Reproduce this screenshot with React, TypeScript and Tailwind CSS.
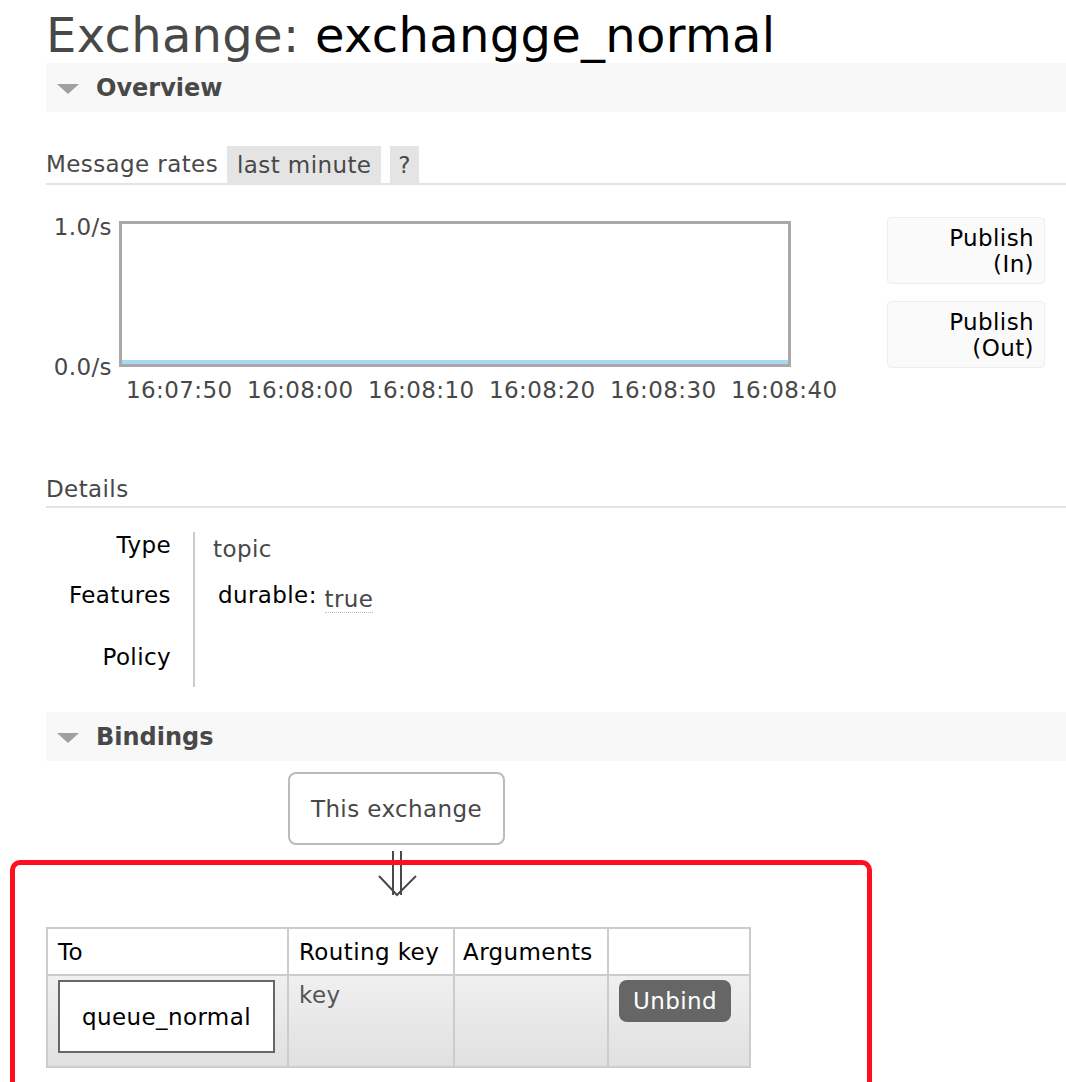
import React from 'react';

const font = { fontFamily: '"DejaVu Sans", Verdana, sans-serif' };

const times = ['16:07:50', '16:08:00', '16:08:10', '16:08:20', '16:08:30', '16:08:40'];

const SectionHeader = ({ title }: { title: string }) => (
  <div className="flex h-[49px] items-center bg-[#f8f8f8] pl-[11px]">
    <svg width="22" height="10" viewBox="0 0 22 10" className="mr-[17px] mt-[2px]">
      <polygon points="0,0 22,0 11,10" fill="#a0a0a0" />
    </svg>
    <span className="text-[24px] font-bold leading-[28px] tracking-normal text-[#484848]">{title}</span>
  </div>
);

const LegendBox = ({ a, b }: { a: string; b: string }) => (
  <div className="flex h-[67px] w-[158px] flex-col items-end justify-center rounded-[4px] border border-[#eeeeee] bg-[#fafafa] pr-[10px] leading-[26px] text-black">
    <span>{a}</span>
    <span>{b}</span>
  </div>
);

export default function App() {
  return (
    <div
      className="relative min-h-[1082px] overflow-hidden bg-white pl-[46px] text-[23px] leading-[26px] tracking-[0.4px]"
      style={font}
    >
      <h1 className="pt-[7px] text-[48px] leading-[56px] tracking-[0.3px] text-[#484848]">
        Exchange: <span className="text-black">exchangge_normal</span>
      </h1>

      <SectionHeader title="Overview" />

      {/* message rates */}
      <div className="mt-[34px] flex h-[39px] items-end border-b-2 border-[#e4e4e4] text-[#484848]">
        <span className="pb-[6px]">Message rates</span>
        <span className="ml-[9px] flex h-[37px] items-center bg-[#e4e4e4] px-[10px]">last minute</span>
        <span className="ml-[9px] flex h-[37px] items-center bg-[#e4e4e4] px-[8px]">?</span>
      </div>

      <div className="mt-[36px] flex">
        <div className="flex w-[780px] shrink-0 flex-col">
          <div className="flex">
            <div className="flex h-[146px] w-[66px] flex-col items-end justify-between text-[#484848]">
              <span className="-mt-[7px]">1.0/s</span>
              <span className="-mb-[13px]">0.0/s</span>
            </div>
            <div className="ml-[7px] flex h-[146px] w-[672px] flex-col justify-end border-[3px] border-[#a9a9a9]">
              <div className="h-[4px] bg-[#a8d8f2]" />
            </div>
          </div>
          <div className="ml-[80px] mt-[10px] flex whitespace-nowrap text-[#484848]">
            {times.map((t) => (
              <span key={t} className="w-[121px] shrink-0">
                {t}
              </span>
            ))}
          </div>
        </div>
        <div className="ml-[61px] -mt-[4px] flex flex-col gap-[17px]">
          <LegendBox a="Publish" b="(In)" />
          <LegendBox a="Publish" b="(Out)" />
        </div>
      </div>

      {/* details */}
      <div className="mt-[73px] border-b-2 border-[#e4e4e4] pb-[4px] text-[#484848]">Details</div>
      <div className="mt-[24px] flex">
        <div className="flex w-[147px] flex-col items-end pr-[22px] text-black">
          <span>Type</span>
          <span className="mt-[24px]">Features</span>
          <span className="mt-[36px]">Policy</span>
        </div>
        <div className="h-[155px] w-[2px] bg-[#cccccc]" />
        <div className="flex flex-col pl-[18px]">
          <span className="mt-[4px] text-[#484848]">topic</span>
          <span className="ml-[5px] mt-[20px] text-black">
            durable:{' '}
            <span className="relative top-[4px] border-b border-dotted border-[#bbbbbb] text-[#484848]">true</span>
          </span>
        </div>
      </div>

      <div className="mt-[25px]">
        <SectionHeader title="Bindings" />
      </div>

      <div className="ml-[242px] mt-[11px] flex h-[73px] w-[217px] items-center justify-center rounded-[8px] border-2 border-[#bbbbbb] text-[#484848]">
        This exchange
      </div>
      <div className="ml-[331px] mt-[6px] h-[46px]">
        <svg width="42" height="46" viewBox="0 0 42 46">
          <path
            d="M16 0 V44 M24 0 V44 M2 25 L20 44 L39 25"
            fill="none"
            stroke="#4a4a4a"
            strokeWidth="2"
          />
        </svg>
      </div>

      <table className="mt-[30px] border-collapse text-black">
        <thead>
          <tr className="h-[47px]">
            <th className="w-[241px] border-2 border-[#cccccc] px-[10px] text-left font-normal">To</th>
            <th className="w-[166px] border-2 border-[#cccccc] px-[10px] text-left font-normal">Routing key</th>
            <th className="w-[154px] border-2 border-[#cccccc] px-[8px] text-left font-normal">Arguments</th>
            <th className="w-[142px] border-2 border-[#cccccc]"></th>
          </tr>
        </thead>
        <tbody>
          <tr className="h-[92px] bg-gradient-to-b from-[#f0f0f0] to-[#e0e0e0]">
            <td className="border-2 border-[#cccccc] px-[10px] align-top">
              <div className="mt-[4px] flex h-[73px] w-[217px] items-center justify-center border-2 border-[#666666] bg-white">
                queue_normal
              </div>
            </td>
            <td className="border-2 border-[#cccccc] px-[10px] pt-[6px] align-top text-[#555555]">key</td>
            <td className="border-2 border-[#cccccc] align-top"></td>
            <td className="border-2 border-[#cccccc] px-[10px] pt-[4px] align-top">
              <span className="flex h-[42px] w-[112px] items-center justify-center rounded-[8px] bg-[#666666] text-white">
                Unbind
              </span>
            </td>
          </tr>
        </tbody>
      </table>

      {/* red annotation frame */}
      <div className="pointer-events-none absolute left-[10px] top-[860px] h-[260px] w-[862px] rounded-[10px] border-[5px] border-[#ff1020]" />
    </div>
  );
}
